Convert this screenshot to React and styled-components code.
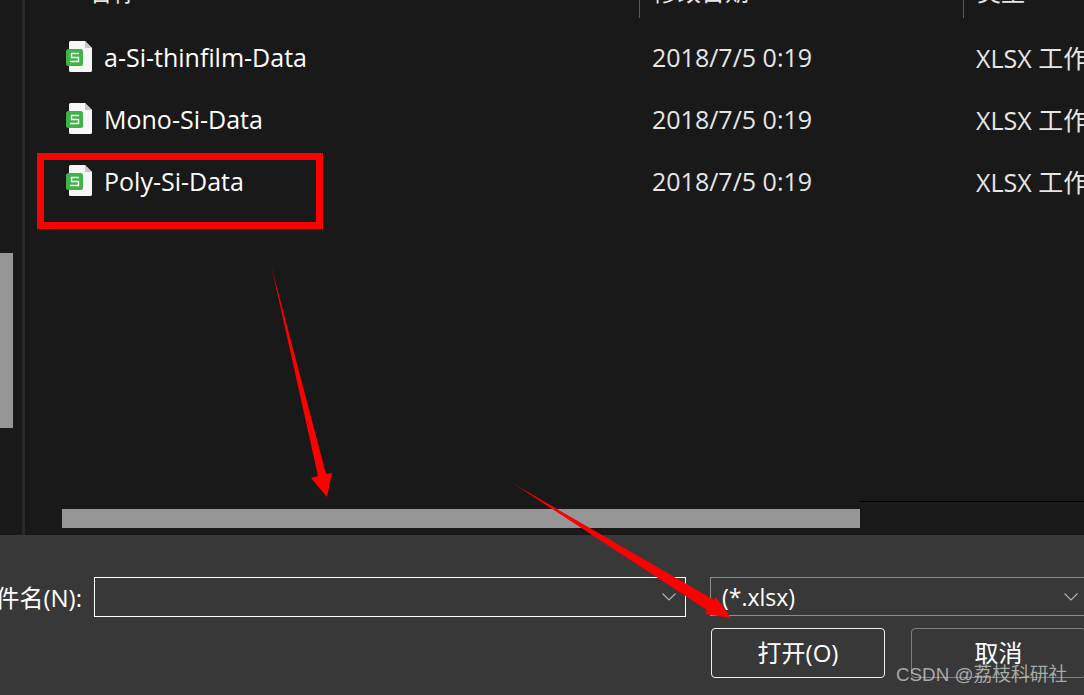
import React from 'react'
import styled, { createGlobalStyle } from 'styled-components'

const files = ['a-Si-thinfilm-Data', 'Mono-Si-Data', 'Poly-Si-Data']
const uiFont = `'Open Sans', 'Noto Sans CJK SC', sans-serif`

const GlobalStyle = createGlobalStyle`
  html, body {
    margin: 0;
    padding: 0;
    background: #191919;
  }
`

const SheetIcon = () => (
  <IconSvg viewBox='0 0 28 32' width='28' height='32'>
    <path d='M4 1.5a1.5 1.5 0 0 1 1.5-1.5H20l7 7v22.5a1.5 1.5 0 0 1-1.5 1.5h-20A1.5 1.5 0 0 1 4 29.5z' fill='#f7f7f7' />
    <path d='M20 0l7 7h-7z' fill='#c9c9c9' />
    <rect x='1' y='8' width='17' height='17' rx='2.5' fill='#3fb34a' />
    <path d='M14 12.5H6.5v4h7v4H5' fill='none' stroke='#ffffff' strokeWidth='1.4' />
  </IconSvg>
)

const Chevron = () => (
  <ChevronSvg viewBox='0 0 14 8' width='14' height='8'>
    <polyline points='0.5,0.5 7,7 13.5,0.5' fill='none' stroke='#b4b4b4' strokeWidth='1.1' />
  </ChevronSvg>
)

const App = () => {
  return (
    <Page>
      <GlobalStyle />
      <Browser>
        <NavPane>
          <NavThumb />
        </NavPane>
        <Divider />
        <ListPane>
          <Columns>
            <HeadCell $indent='63px'>名称</HeadCell>
            <HeadCell $indent='13px' $line>修改日期</HeadCell>
            <HeadCell $indent='13px' $line>类型</HeadCell>
          </Columns>
          <Rows>
            {files.map((name) => (
              <Row key={name}>
                <NameCell>
                  <SheetIcon />
                  <FileName>{name}</FileName>
                </NameCell>
                <DetailCell>2018/7/5 0:19</DetailCell>
                <DetailCell>XLSX 工作表</DetailCell>
              </Row>
            ))}
          </Rows>
          <HScroll>
            <HThumb />
            <HEdge />
          </HScroll>
        </ListPane>
      </Browser>
      <Footer>
        <FieldRow>
          <FieldLabel>
            <span>文件名(N):</span>
          </FieldLabel>
          <NameInput>
            <Chevron />
          </NameInput>
          <TypeSelect>
            <span>(*.xlsx)</span>
            <Chevron />
          </TypeSelect>
        </FieldRow>
        <ButtonRow>
          <Button $primary>打开(O)</Button>
          <Button>取消</Button>
        </ButtonRow>
      </Footer>
      <Callout />
      <Arrows viewBox='0 0 1084 695'>
        <polygon points='271.5,267 326,474 332,473 327,497 311,478 318,476' fill='#ff0000' />
        <polygon points='514,484 714,600 716,597 731,618 705,614 707,610' fill='#ff0000' />
      </Arrows>
      <Watermark>CSDN @荔枝科研社</Watermark>
    </Page>
  )
}

const Page = styled.div`
  position: relative;
  width: 1084px;
  height: 695px;
  overflow: hidden;
  background: #191919;
  color: #fff;
  font-family: ${uiFont};
`
const Browser = styled.div`
  display: flex;
  height: 535px;
  background: #191919;
`
const NavPane = styled.div`
  width: 22px;
  flex: none;
  padding-top: 253px;
  box-sizing: border-box;
`
const NavThumb = styled.div`
  width: 13px;
  height: 175px;
  background: #969696;
`
const Divider = styled.div`
  width: 3px;
  flex: none;
  background: #2a2a2a;
`
const ListPane = styled.div`
  flex: 1;
  min-width: 0;
  display: flex;
  flex-direction: column;
`
const Columns = styled.div`
  display: grid;
  grid-template-columns: 614px 324px 1fr;
  height: 18px;
  overflow: hidden;
`
const HeadCell = styled.div`
  display: flex;
  align-items: flex-end;
  height: 18px;
  padding-left: ${(p) => p.$indent};
  padding-bottom: 10px;
  box-sizing: border-box;
  font-size: 24px;
  line-height: 32px;
  color: #e6e6e6;
  border-left: ${(p) => (p.$line ? '1px solid #5a5a5a' : 'none')};
`
const Rows = styled.div`
  flex: 1;
  padding-top: 9px;
`
const Row = styled.div`
  display: grid;
  grid-template-columns: 614px 324px 1fr;
  align-items: center;
  height: 62px;
  font-size: 25px;
  white-space: nowrap;
`
const NameCell = styled.div`
  display: flex;
  align-items: center;
  padding-left: 40px;
  gap: 11px;
  color: #fff;
`
const FileName = styled.span`
  padding-bottom: 2px;
`
const IconSvg = styled.svg`
  flex: none;
  position: relative;
  top: -1px;
`
const DetailCell = styled.div`
  padding-left: 13px;
  padding-bottom: 2px;
  color: #e6e6e6;
`
const HScroll = styled.div`
  display: flex;
  height: 27px;
  margin-bottom: 7px;
  padding-left: 37px;
`
const HThumb = styled.div`
  width: 798px;
  height: 19px;
  margin-top: 8px;
  background: #969696;
`
const HEdge = styled.div`
  flex: 1;
  border-top: 1px solid #000;
`
const Footer = styled.div`
  height: 160px;
  background: #383838;
  padding-top: 42px;
  box-sizing: border-box;
`
const FieldRow = styled.div`
  display: flex;
  align-items: flex-start;
  height: 51px;
`
const FieldLabel = styled.div`
  display: flex;
  justify-content: flex-end;
  align-items: center;
  width: 82px;
  height: 40px;
  margin-right: 12px;
  padding-bottom: 2px;
  box-sizing: border-box;
  overflow: hidden;
  font-size: 24px;
  white-space: nowrap;
  flex: none;
`
const NameInput = styled.div`
  display: flex;
  align-items: center;
  justify-content: flex-end;
  width: 592px;
  height: 40px;
  margin-right: 24px;
  padding-right: 9px;
  box-sizing: border-box;
  border: 1px solid #fff;
  flex: none;
`
const TypeSelect = styled.div`
  display: flex;
  align-items: center;
  justify-content: space-between;
  width: 374px;
  height: 39px;
  padding: 0 6px 0 11px;
  box-sizing: border-box;
  border: 1px solid #8c8c8c;
  border-right: 0;
  font-size: 23px;
  flex: none;
`
const ChevronSvg = styled.svg`
  flex: none;
`
const ButtonRow = styled.div`
  display: flex;
  gap: 26px;
  padding-left: 711px;
`
const Button = styled.div`
  display: flex;
  align-items: center;
  justify-content: center;
  width: ${(p) => (p.$primary ? '174px' : '175px')};
  height: 50px;
  padding-bottom: 3px;
  box-sizing: border-box;
  flex: none;
  border: 1px solid ${(p) => (p.$primary ? '#f0f0f0' : '#7e7e7e')};
  border-radius: 4px;
  font-size: 24px;
`
const Callout = styled.div`
  position: absolute;
  left: 37px;
  top: 153px;
  width: 286px;
  height: 76px;
  box-sizing: border-box;
  border: 7px solid #ff0000;
`
const Arrows = styled.svg`
  position: absolute;
  left: 0;
  top: 0;
  width: 1084px;
  height: 695px;
  pointer-events: none;
`
const Watermark = styled.div`
  position: absolute;
  left: 896px;
  top: 664px;
  font-family: 'Liberation Sans', 'Noto Sans CJK SC', sans-serif;
  font-size: 18.8px;
  line-height: 22px;
  white-space: nowrap;
  color: rgba(190, 190, 190, 0.85);
`
export default App
